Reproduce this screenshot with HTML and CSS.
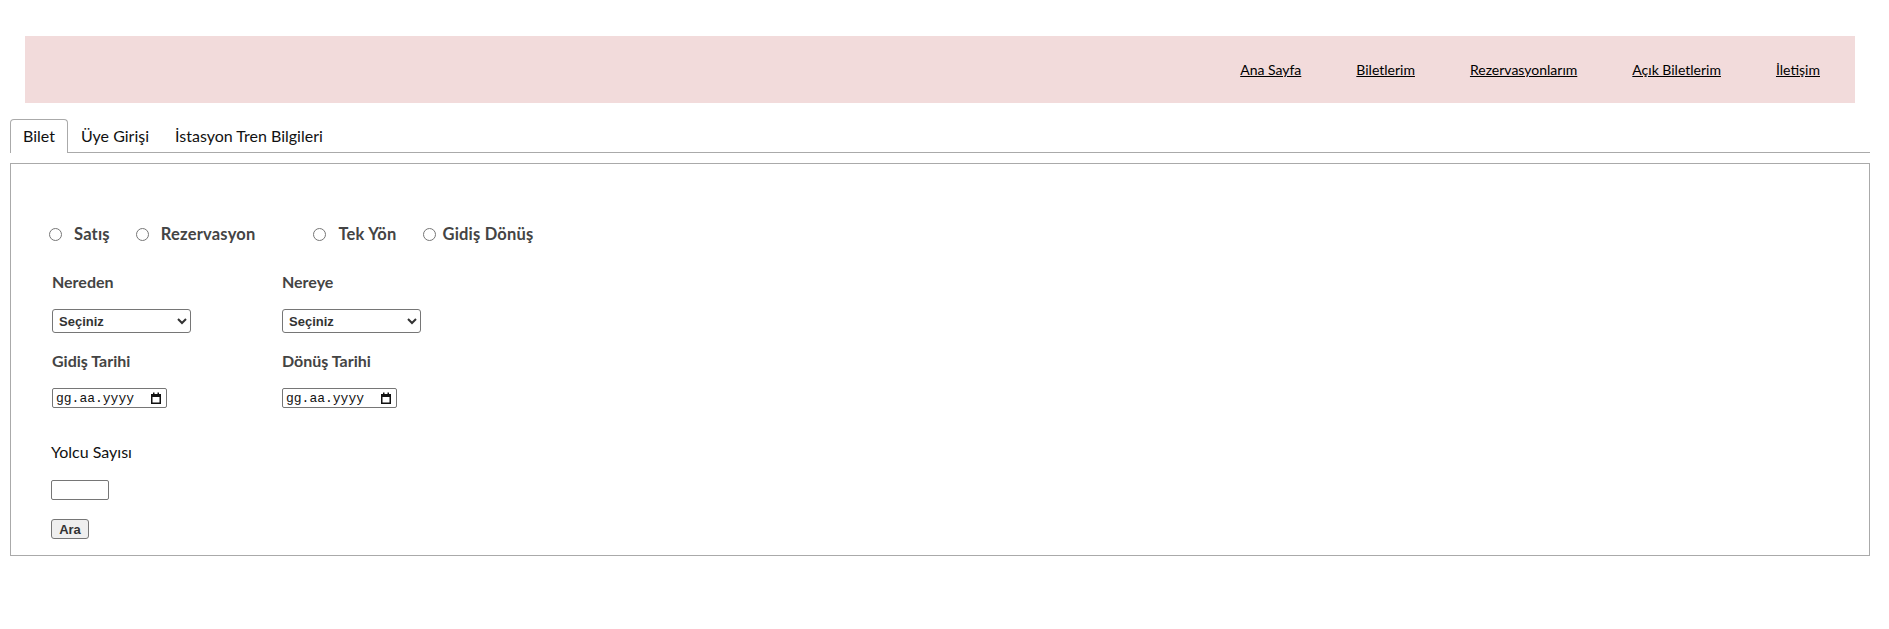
FILE: index.html
```html
<!DOCTYPE html>
<html lang="tr">
<head>
    <meta charset="UTF-8">
    <meta name="viewport" content="width=device-width, initial-scale=1.0">
    <title>Bilet</title>
    <link rel="stylesheet" href="styles.css">
</head>
<body>
    <!-- Top menu -->
    <div class="top-bar">
        <a href="#" class="nav-link">Ana Sayfa</a>
        <a href="#" class="nav-link">Biletlerim</a>
        <a href="#" class="nav-link">Rezervasyonlarım</a>
        <a href="#" class="nav-link">Açık Biletlerim</a>
        <a href="#" class="nav-link">İletişim</a>
    </div>

    <!-- Tabs -->
    <ul class="tabs">
        <li class="tab active">Bilet</li>
        <li class="tab">Üye Girişi</li>
        <li class="tab">İstasyon Tren Bilgileri</li>
    </ul>

    <div class="tab-panel">
        <div class="radio-row">
            <div class="radio-group">
                <label class="radio-option"><input type="radio" name="islem"><span>Satış</span></label>
                <label class="radio-option"><input type="radio" name="islem"><span>Rezervasyon</span></label>
            </div>
            <div class="radio-group">
                <label class="radio-option"><input type="radio" name="yon"><span>Tek Yön</span></label>
                <label class="radio-option tight"><input type="radio" name="yon"><span>Gidiş Dönüş</span></label>
            </div>
        </div>

        <div class="field-grid">
            <div class="field-label">Nereden</div>
            <div class="field-label">Nereye</div>
            <div class="field-input">
                <select class="station-select"><option>Seçiniz</option></select>
            </div>
            <div class="field-input">
                <select class="station-select"><option>Seçiniz</option></select>
            </div>
            <div class="field-label">Gidiş Tarihi</div>
            <div class="field-label">Dönüş Tarihi</div>
            <div class="field-input">
                <div class="date-field">
                    <span>gg.aa.yyyy</span>
                    <svg class="cal-icon" width="10" height="12" viewBox="0 0 10 12"><rect x="0.75" y="2.75" width="8.5" height="8.5" fill="none" stroke="#111" stroke-width="1.5"/><rect x="0" y="2" width="10" height="3" fill="#111"/><rect x="2" y="0.5" width="1.5" height="2" fill="#111"/><rect x="6.5" y="0.5" width="1.5" height="2" fill="#111"/></svg>
                </div>
            </div>
            <div class="field-input">
                <div class="date-field">
                    <span>gg.aa.yyyy</span>
                    <svg class="cal-icon" width="10" height="12" viewBox="0 0 10 12"><rect x="0.75" y="2.75" width="8.5" height="8.5" fill="none" stroke="#111" stroke-width="1.5"/><rect x="0" y="2" width="10" height="3" fill="#111"/><rect x="2" y="0.5" width="1.5" height="2" fill="#111"/><rect x="6.5" y="0.5" width="1.5" height="2" fill="#111"/></svg>
                </div>
            </div>
        </div>

        <div class="passenger">
            <div class="passenger-label">Yolcu Sayısı</div>
            <input type="text" class="passenger-input">
            <button class="search-btn">Ara</button>
        </div>
    </div>
</body>
</html>
```

FILE: styles.css
```css
body {
    font-family: Lato, "Open Sans", sans-serif;
    background-color: white;
    color: #000;
    margin: 0;
}

.top-bar {
    margin: 36px 34px 0 25px;
    height: 67px;
    background-color: #f2dbdb;
    display: flex;
    justify-content: flex-end;
    align-items: center;
    gap: 55px;
    padding-right: 35px;
}

.nav-link {
    color: #000;
    font-size: 14px;
    text-decoration: underline;
}

.tabs {
    list-style: none;
    margin: 16px 19px 0 10px;
    padding: 0;
    display: flex;
    border-bottom: 1px solid #aaa;
}

.tab {
    font-size: 16px;
    line-height: 20px;
    padding: 6px 12px;
    border: 1px solid transparent;
    border-bottom: none;
    color: #111;
}

.tab.active {
    border-color: #aaa;
    border-radius: 4px 4px 0 0;
    background-color: white;
    margin-bottom: -1px;
    padding-bottom: 7px;
}

.tab-panel {
    margin: 10px 19px 0 10px;
    border: 1px solid #aaa;
    padding: 60px 0 16px 41px;
    height: 393px;
    box-sizing: border-box;
}

.radio-row {
    display: flex;
    gap: 58px;
    height: 20px;
    margin-left: -3px;
}

.radio-group {
    display: flex;
    gap: 26px;
}

.radio-option {
    display: flex;
    align-items: center;
    font-size: 16.5px;
    letter-spacing: 0.2px;
    line-height: 20px;
    font-weight: bold;
    color: #444;
}

.radio-option input {
    margin: 0 12px 0 0;
    width: 13px;
    height: 13px;
}

.radio-option.tight input {
    margin-right: 7px;
}

.field-grid {
    display: grid;
    grid-template-columns: 230px 230px;
    margin-top: 28px;
}

.field-label {
    font-size: 16px;
    line-height: 20px;
    font-weight: bold;
    color: #444;
}

.field-input {
    margin: 17px 0 18px;
}

.station-select {
    width: 139px;
    height: 24px;
    font-family: "Liberation Sans", Arial, sans-serif;
    font-size: 13px;
    font-weight: bold;
    color: #333;
    border: 1px solid #767676;
    border-radius: 3px;
    background-color: white;
    padding: 0 2px;
    margin: 0;
}

.date-field {
    width: 115px;
    height: 20px;
    box-sizing: border-box;
    border: 1px solid #767676;
    border-radius: 2px;
    display: flex;
    align-items: center;
    justify-content: space-between;
    padding: 0 5px 0 3px;
    font-family: "Liberation Mono", monospace;
    font-size: 13px;
    color: #111;
}

.passenger {
    margin-top: 16px;
    margin-left: -1px;
}

.passenger-label {
    font-size: 16px;
    line-height: 20px;
    color: #111;
}

.passenger-input {
    display: block;
    width: 58px;
    height: 20px;
    box-sizing: border-box;
    border: 1px solid #767676;
    border-radius: 2px;
    margin: 18px 0 19px;
    padding: 0 3px;
}

.search-btn {
    display: block;
    width: 38px;
    height: 20px;
    padding: 0;
    font-family: "Liberation Sans", Arial, sans-serif;
    font-size: 13px;
    font-weight: bold;
    color: #333;
    background-color: #efefef;
    border: 1px solid #767676;
    border-radius: 3px;
}
```
